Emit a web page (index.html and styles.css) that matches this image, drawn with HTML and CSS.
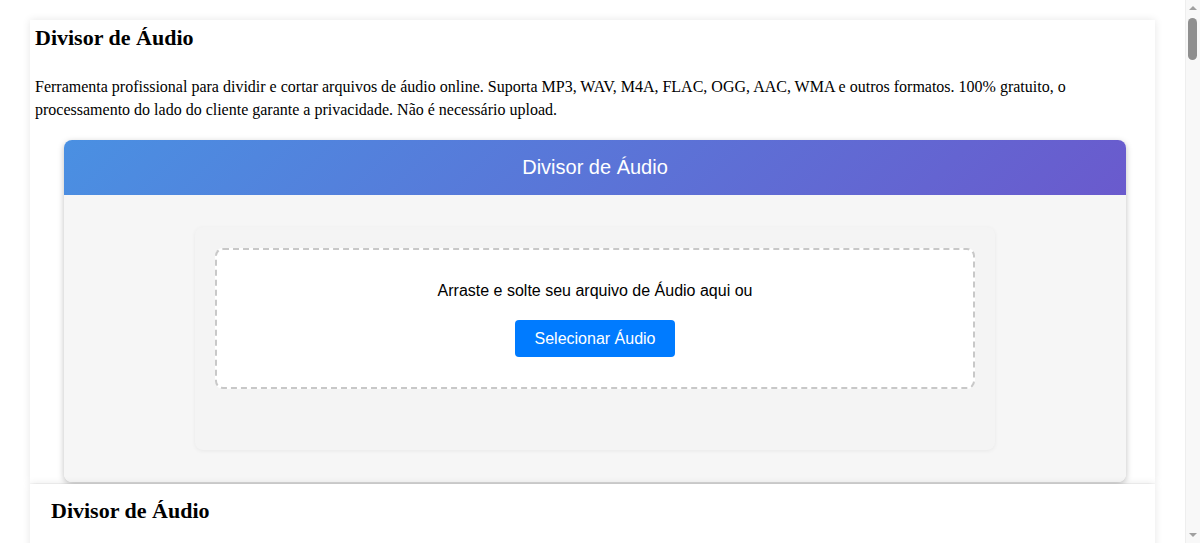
FILE: index.html
```html
<!DOCTYPE html>
<html lang="pt-BR">
<head>
    <meta charset="UTF-8">
    <meta name="viewport" content="width=device-width, initial-scale=1.0">
    <title>Divisor de Áudio</title>
    <link rel="stylesheet" href="styles.css">
</head>
<body>
    <section class="page-card intro">
        <h2>Divisor de Áudio</h2>
        <p>Ferramenta profissional para dividir e cortar arquivos de áudio online. Suporta MP3, WAV, M4A, FLAC, OGG, AAC, WMA e outros formatos. 100% gratuito, o processamento do lado do cliente garante a privacidade. Não é necessário upload.</p>

        <div class="tool">
            <div class="tool-header">Divisor de Áudio</div>
            <div class="tool-body">
                <div class="panel">
                    <div class="drop-zone" id="dropZone">
                        <div class="drop-text">Arraste e solte seu arquivo de Áudio aqui ou</div>
                        <button class="select-btn" id="selectBtn">Selecionar Áudio</button>
                        <input type="file" id="fileInput" accept="audio/*" hidden>
                    </div>
                </div>
            </div>
        </div>
    </section>

    <section class="page-card about">
        <h2>Divisor de Áudio</h2>
    </section>

    <!-- classic scrollbar, drawn since the browser hides its own -->
    <div class="scrollbar">
        <span class="arrow up"></span>
        <span class="thumb"></span>
        <span class="arrow down"></span>
    </div>

    <script>
        const selectBtn = document.getElementById("selectBtn");
        const fileInput = document.getElementById("fileInput");
        selectBtn.addEventListener("click", function() {
            fileInput.click();
        });
    </script>
</body>
</html>
```

FILE: styles.css
```css
body {
    margin: 0;
    padding: 20px 45px 40px 30px;
    background-color: #ffffff;
    font-family: "Liberation Serif", "Times New Roman", serif;
    color: #000;
}

.page-card {
    background-color: #fff;
    box-shadow: 0 0 8px rgba(0, 0, 0, 0.1);
}

.page-card h2 {
    font-size: 22px;
    font-weight: bold;
    margin: 0;
    line-height: 25px;
}

.page-card p {
    font-size: 16px;
    line-height: 23px;
    margin: 0;
}

.intro {
    padding: 5px 5px 1px;
}

.intro h2 {
    margin-bottom: 25px;
}

.intro p {
    margin-bottom: 19px;
}

/* the tool card */
.tool {
    width: 1062px;
    margin-left: 29px;
    border-radius: 8px;
    overflow: hidden;
    box-shadow: 0 2px 6px rgba(0, 0, 0, 0.25);
    font-family: "Liberation Sans", Arial, sans-serif;
}

.tool-header {
    height: 55px;
    display: flex;
    align-items: center;
    justify-content: center;
    background: linear-gradient(135deg, #4a90e2, #6a5acd);
    color: #fff;
    font-size: 20px;
}

.tool-body {
    background-color: #f6f6f6;
    padding: 32px 0;
}

.panel {
    width: 760px;
    margin: 0 auto;
    padding: 21px 20px 61px;
    background-color: #f4f4f4;
    border-radius: 8px;
    box-shadow: 0 1px 4px rgba(0, 0, 0, 0.06);
}

.drop-zone {
    background-color: #fff;
    border: 2px dashed #c8c8c8;
    border-radius: 8px;
    padding: 32px 20px 30px;
    text-align: center;
}

.drop-text {
    font-size: 16px;
    line-height: 18px;
    margin-bottom: 20px;
}

.select-btn {
    background-color: #007bff;
    color: #fff;
    border: none;
    border-radius: 4px;
    padding: 10px 20px;
    font-family: inherit;
    font-size: 16px;
    line-height: 17px;
    cursor: pointer;
}

.select-btn:hover {
    background-color: #0069d9;
}

.about {
    margin-top: 1px;
    padding: 14px 21px;
    min-height: 6000px;
}

/* fake scrollbar */
.scrollbar {
    position: fixed;
    top: 0;
    right: 0;
    width: 15px;
    height: 100vh;
    background-color: #f8f8f8;
    border-left: 1px solid #eeeeee;
    box-sizing: border-box;
}

.arrow {
    position: absolute;
    left: 3px;
    width: 0;
    height: 0;
    border-left: 4px solid transparent;
    border-right: 4px solid transparent;
}

.arrow.up {
    top: 6px;
    border-bottom: 4px solid #a0a0a0;
}

.arrow.down {
    bottom: 6px;
    border-top: 4px solid #a0a0a0;
}

.thumb {
    position: absolute;
    top: 18px;
    left: 2px;
    width: 9px;
    height: 42px;
    border-radius: 5px;
    background-color: #8f8f8f;
}
```
